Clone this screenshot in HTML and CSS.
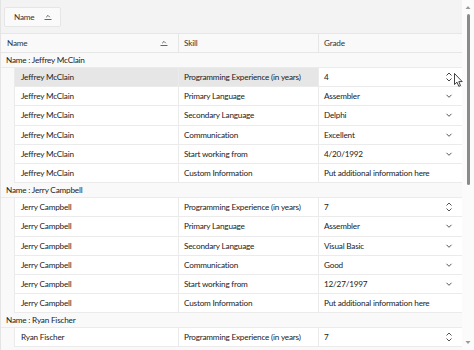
FILE: index.html
```html
<!DOCTYPE html>
<html>
<head>
<meta charset="utf-8">
<link rel="stylesheet" href="styles.css">
</head>
<body>
<div class="grid">
  <div class="main">
    <div class="group-panel">
      <div class="chip"><span>Name</span>
        <svg class="sort" width="8" height="7" viewBox="0 0 8 7"><path d="M2.2 3.2 L4 1.4 L5.8 3.2" fill="none" stroke="#555" stroke-width="0.9"/><path d="M0.5 5.5 H7.5" stroke="#555" stroke-width="0.9"/></svg>
      </div>
    </div>
    <div class="header">
      <div class="hcell c-name"><span>Name</span>
        <svg class="sort" width="8" height="7" viewBox="0 0 8 7"><path d="M2.2 3.2 L4 1.4 L5.8 3.2" fill="none" stroke="#555" stroke-width="0.9"/><path d="M0.5 5.5 H7.5" stroke="#555" stroke-width="0.9"/></svg>
      </div>
      <div class="hcell c-skill">Skill</div>
      <div class="hcell c-grade">Grade</div>
    </div>

    <div class="group-row">Name : Jeffrey McClain</div>
    <div class="row selected">
      <div class="indent"></div>
      <div class="cell c-name sel">Jeffrey McClain</div>
      <div class="cell c-skill sel">Programming Experience (in years)</div>
      <div class="cell c-grade"><span>4</span>
        <svg class="spin" width="8" height="12" viewBox="0 0 8 12"><path d="M1.5 4.5 L4 2 L6.5 4.5" fill="none" stroke="#444" stroke-width="1"/><path d="M1.5 7.5 L4 10 L6.5 7.5" fill="none" stroke="#444" stroke-width="1"/></svg>
      </div>
    </div>
    <div class="row">
      <div class="indent"></div>
      <div class="cell c-name">Jeffrey McClain</div>
      <div class="cell c-skill">Primary Language</div>
      <div class="cell c-grade"><span>Assembler</span><svg class="drop" width="8" height="6" viewBox="0 0 8 6"><path d="M1.5 1.8 L4 4.3 L6.5 1.8" fill="none" stroke="#555" stroke-width="1"/></svg></div>
    </div>
    <div class="row">
      <div class="indent"></div>
      <div class="cell c-name">Jeffrey McClain</div>
      <div class="cell c-skill">Secondary Language</div>
      <div class="cell c-grade"><span>Delphi</span><svg class="drop" width="8" height="6" viewBox="0 0 8 6"><path d="M1.5 1.8 L4 4.3 L6.5 1.8" fill="none" stroke="#555" stroke-width="1"/></svg></div>
    </div>
    <div class="row">
      <div class="indent"></div>
      <div class="cell c-name">Jeffrey McClain</div>
      <div class="cell c-skill">Communication</div>
      <div class="cell c-grade"><span>Excellent</span><svg class="drop" width="8" height="6" viewBox="0 0 8 6"><path d="M1.5 1.8 L4 4.3 L6.5 1.8" fill="none" stroke="#555" stroke-width="1"/></svg></div>
    </div>
    <div class="row">
      <div class="indent"></div>
      <div class="cell c-name">Jeffrey McClain</div>
      <div class="cell c-skill">Start working from</div>
      <div class="cell c-grade"><span>4/20/1992</span><svg class="drop" width="8" height="6" viewBox="0 0 8 6"><path d="M1.5 1.8 L4 4.3 L6.5 1.8" fill="none" stroke="#555" stroke-width="1"/></svg></div>
    </div>
    <div class="row">
      <div class="indent"></div>
      <div class="cell c-name">Jeffrey McClain</div>
      <div class="cell c-skill">Custom Information</div>
      <div class="cell c-grade"><span>Put additional information here</span></div>
    </div>

    <div class="group-row">Name : Jerry Campbell</div>
    <div class="row">
      <div class="indent"></div>
      <div class="cell c-name">Jerry Campbell</div>
      <div class="cell c-skill">Programming Experience (in years)</div>
      <div class="cell c-grade"><span>7</span>
        <svg class="spin" width="8" height="12" viewBox="0 0 8 12"><path d="M1.5 4.5 L4 2 L6.5 4.5" fill="none" stroke="#555" stroke-width="1"/><path d="M1.5 7.5 L4 10 L6.5 7.5" fill="none" stroke="#555" stroke-width="1"/></svg>
      </div>
    </div>
    <div class="row">
      <div class="indent"></div>
      <div class="cell c-name">Jerry Campbell</div>
      <div class="cell c-skill">Primary Language</div>
      <div class="cell c-grade"><span>Assembler</span><svg class="drop" width="8" height="6" viewBox="0 0 8 6"><path d="M1.5 1.8 L4 4.3 L6.5 1.8" fill="none" stroke="#555" stroke-width="1"/></svg></div>
    </div>
    <div class="row">
      <div class="indent"></div>
      <div class="cell c-name">Jerry Campbell</div>
      <div class="cell c-skill">Secondary Language</div>
      <div class="cell c-grade"><span>Visual Basic</span><svg class="drop" width="8" height="6" viewBox="0 0 8 6"><path d="M1.5 1.8 L4 4.3 L6.5 1.8" fill="none" stroke="#555" stroke-width="1"/></svg></div>
    </div>
    <div class="row">
      <div class="indent"></div>
      <div class="cell c-name">Jerry Campbell</div>
      <div class="cell c-skill">Communication</div>
      <div class="cell c-grade"><span>Good</span><svg class="drop" width="8" height="6" viewBox="0 0 8 6"><path d="M1.5 1.8 L4 4.3 L6.5 1.8" fill="none" stroke="#555" stroke-width="1"/></svg></div>
    </div>
    <div class="row">
      <div class="indent"></div>
      <div class="cell c-name">Jerry Campbell</div>
      <div class="cell c-skill">Start working from</div>
      <div class="cell c-grade"><span>12/27/1997</span><svg class="drop" width="8" height="6" viewBox="0 0 8 6"><path d="M1.5 1.8 L4 4.3 L6.5 1.8" fill="none" stroke="#555" stroke-width="1"/></svg></div>
    </div>
    <div class="row">
      <div class="indent"></div>
      <div class="cell c-name">Jerry Campbell</div>
      <div class="cell c-skill">Custom Information</div>
      <div class="cell c-grade"><span>Put additional information here</span></div>
    </div>

    <div class="group-row">Name : Ryan Fischer</div>
    <div class="row">
      <div class="indent"></div>
      <div class="cell c-name">Ryan Fischer</div>
      <div class="cell c-skill">Programming Experience (in years)</div>
      <div class="cell c-grade"><span>7</span>
        <svg class="spin" width="8" height="12" viewBox="0 0 8 12"><path d="M1.5 4.5 L4 2 L6.5 4.5" fill="none" stroke="#555" stroke-width="1"/><path d="M1.5 7.5 L4 10 L6.5 7.5" fill="none" stroke="#555" stroke-width="1"/></svg>
      </div>
    </div>
  </div>
  <div class="scrollbar">
    <svg class="arrow" width="6" height="5" viewBox="0 0 6 5"><path d="M0.5 4 L3 1 L5.5 4 Z" fill="#999"/></svg>
    <div class="track"><div class="thumb"></div></div>
    <svg class="arrow" width="6" height="5" viewBox="0 0 6 5"><path d="M0.5 1 L3 4 L5.5 1 Z" fill="#999"/></svg>
  </div>
  <svg class="cursor" width="10" height="15" viewBox="0 0 10 15"><path d="M0.5 0.5 L0.5 11.5 L3 9.2 L4.8 13.3 L6.5 12.6 L4.8 8.6 L8.2 8.6 Z" fill="#ffffff" stroke="#111" stroke-width="0.8" stroke-linejoin="round"/></svg>
</div>
</body>
</html>
```

FILE: styles.css
```css
html, body {
  margin: 0;
  padding: 0;
  background: #ffffff;
}
body {
  font-family: Lato, "Noto Sans", sans-serif;
  font-size: 8.2px;
  letter-spacing: -0.2px;
  color: #222222;
}
.grid {
  position: relative;
  width: 474px;
  height: 350px;
  display: flex;
  overflow: hidden;
  background: #f9f9f9;
}
.main {
  width: 462px;
  flex: none;
  display: flex;
  flex-direction: column;
  border-left: 1px solid #e4e4e4;
  box-sizing: border-box;
  overflow: hidden;
}
.group-panel {
  height: 33px;
  flex: none;
  box-sizing: border-box;
  background: #f3f3f3;
  padding: 7px 0 0 3px;
}
.chip {
  width: 57px;
  height: 20px;
  box-sizing: border-box;
  background: #fafafa;
  border: 1px solid #e6e6e6;
  border-radius: 2px;
  display: flex;
  align-items: center;
  justify-content: space-between;
  padding: 0 8px 0 9px;
  color: #333;
}
.sort { display: block; }
.header {
  height: 20px;
  flex: none;
  display: flex;
  box-sizing: border-box;
  border-top: 1px solid #e6e6e6;
  border-bottom: 1px solid #e6e6e6;
  background: #f9f9f9;
  color: #333;
}
.hcell {
  box-sizing: border-box;
  display: flex;
  align-items: center;
  border-right: 1px solid #e6e6e6;
}
.header .c-name {
  width: 178px;
  padding: 0 10px 0 6px;
  justify-content: space-between;
}
.header .c-skill { width: 140px; padding-left: 5px; }
.header .c-grade { width: 143px; padding-left: 5px; border-right: none; }
.group-row {
  height: 15px;
  flex: none;
  box-sizing: border-box;
  padding-left: 5px;
  display: flex;
  align-items: center;
  border-bottom: 1px solid #ebebeb;
  background: #f9f9f9;
}
.row {
  height: 19.2px;
  flex: none;
  display: flex;
}
.indent {
  width: 13px;
  flex: none;
  background: #f9f9f9;
}
.cell {
  box-sizing: border-box;
  height: 100%;
  display: flex;
  align-items: center;
  background: #ffffff;
  border-bottom: 1px solid #ebebeb;
  border-right: 1px solid #ebebeb;
  white-space: nowrap;
  overflow: hidden;
}
.cell.sel { background: #e6e6e6; }
.row .c-name { width: 165px; padding-left: 6px; border-left: 1px solid #ebebeb; }
.row .c-skill { width: 140px; padding-left: 5px; }
.row .c-grade {
  width: 143px;
  padding: 0 9px 0 5px;
  justify-content: space-between;
  border-right: none;
}
.spin, .drop { display: block; flex: none; }
.scrollbar {
  width: 12px;
  flex: none;
  display: flex;
  flex-direction: column;
  align-items: center;
  padding: 5px 0 5px 0;
  box-sizing: border-box;
  background: #fbfbfb;
}
.arrow { display: block; flex: none; }
.track {
  flex: 1;
  width: 100%;
  display: flex;
  justify-content: center;
  padding-top: 4px;
}
.thumb {
  width: 3px;
  height: 171px;
  border-radius: 2px;
  background: #8a8a8a;
}
.cursor {
  position: absolute;
  left: 454px;
  top: 73px;
  display: block;
}
```
